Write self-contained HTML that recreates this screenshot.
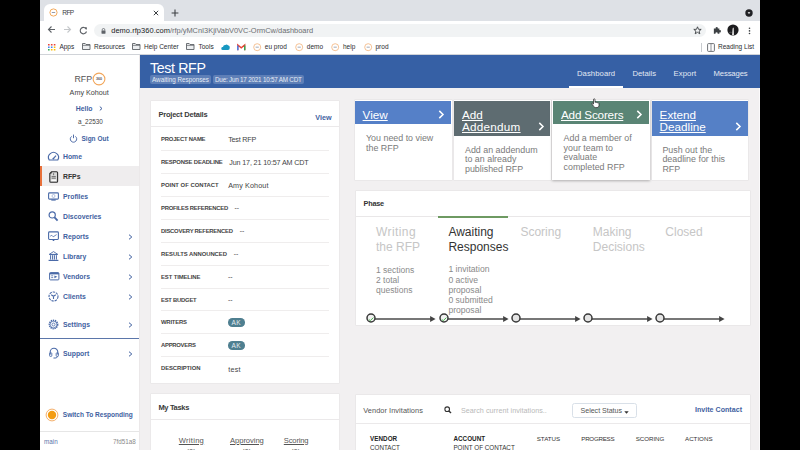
<!DOCTYPE html>
<html><head><meta charset="utf-8">
<style>
*{box-sizing:border-box;margin:0;padding:0}
html,body{width:800px;height:450px;overflow:hidden;background:#000;font-family:"Liberation Sans",sans-serif;position:relative}
.a{position:absolute;white-space:nowrap}
svg{position:absolute;overflow:visible}
</style></head><body>
<div class="a" style="left:40px;top:0px;width:720px;height:450px;background:#fff;"></div>
<div class="a" style="left:40px;top:0px;width:720px;height:21px;background:#dee1e6;"></div>
<div class="a" style="left:44px;top:4px;width:120px;height:17px;background:#fff;border-radius:6px 6px 0 0"></div>
<svg style="left:49px;top:8px" width="9" height="9" viewBox="0 0 9 9"><circle cx="4.5" cy="4.5" r="3.6" fill="#fff" stroke="#f0a04b" stroke-width="0.9"/><rect x="2.8" y="4.1" width="3.4" height="0.9" fill="#8a8fa0"/></svg>
<div class="a" style="left:62.30px;top:10.03px;font-size:6.6px;line-height:6.6px;color:#3c4043;font-weight:400;letter-spacing:-0.663px;font-family:'Liberation Sans',sans-serif;">RFP</div>
<svg style="left:153px;top:9.5px" width="6" height="6" viewBox="0 0 6 6"><path d="M0.8 0.8L5.2 5.2M5.2 0.8L0.8 5.2" stroke="#3c4043" stroke-width="1"/></svg>
<svg style="left:171px;top:8.5px" width="8" height="8" viewBox="0 0 8 8"><path d="M4 0.6V7.4M0.6 4H7.4" stroke="#3c4043" stroke-width="1.1"/></svg>
<svg style="left:744.2px;top:7.6px" width="10" height="10" viewBox="0 0 10 10"><circle cx="5" cy="5" r="3.7" fill="#202124"/><path d="M3.6 4.3 L5 5.9 L6.4 4.3Z" fill="#fff"/></svg>
<div class="a" style="left:40px;top:21px;width:720px;height:16px;background:#fff;"></div>
<div class="a" style="left:94px;top:23.6px;width:612px;height:13.2px;background:#f1f3f4;border-radius:7px"></div>
<svg style="left:47px;top:25px" width="9" height="9" viewBox="0 0 9 9"><path d="M8 4.5H1.5M4.5 1.5L1.5 4.5L4.5 7.5" stroke="#5f6368" stroke-width="1.1" fill="none"/></svg>
<svg style="left:63px;top:25px" width="9" height="9" viewBox="0 0 9 9"><path d="M1 4.5H7.5M4.5 1.5L7.5 4.5L4.5 7.5" stroke="#c4c7ca" stroke-width="1.1" fill="none"/></svg>
<svg style="left:79px;top:25.5px" width="9" height="9" viewBox="0 0 9 9"><path d="M7.3 3.2A3.2 3.2 0 1 0 7.5 5.5" stroke="#5f6368" stroke-width="1.1" fill="none"/><path d="M5.2 1.2L7.8 1.2L7.8 3.8Z" fill="#5f6368"/></svg>
<svg style="left:101px;top:27.5px" width="5" height="6" viewBox="0 0 5 6"><path d="M1.2 2.6V1.8A1.3 1.3 0 0 1 3.8 1.8V2.6" stroke="#5f6368" stroke-width="0.8" fill="none"/><rect x="0.5" y="2.5" width="4" height="3.2" rx="0.4" fill="#5f6368"/></svg>
<div class="a" style="left:111.20px;top:27.32px;font-size:7.45px;line-height:7.45px;color:#202124;font-weight:400;letter-spacing:0.062px;font-family:'Liberation Sans',sans-serif;">demo.rfp360.com</div>
<div class="a" style="left:170.00px;top:27.32px;font-size:7.45px;line-height:7.45px;color:#6b6e72;font-weight:400;letter-spacing:-0.019px;font-family:'Liberation Sans',sans-serif;">/rfp/yMCnI3KjiVabV0VC-OrmCw/dashboard</div>
<svg style="left:692.5px;top:25.5px" width="9" height="9" viewBox="0 0 9 9"><path d="M4.5 0.8L5.5 3.3L8.2 3.4L6.1 5.1L6.8 7.8L4.5 6.3L2.2 7.8L2.9 5.1L0.8 3.4L3.5 3.3Z" fill="none" stroke="#3c4043" stroke-width="0.9" stroke-linejoin="round"/></svg>
<svg style="left:713.3px;top:25.6px" width="8.5" height="8.5" viewBox="0 0 10 10"><path d="M1 3H3.2A1.3 1.3 0 1 1 5.6 3H7.5V5A1.3 1.3 0 1 1 7.5 7.4V9.2H5.4A1.3 1.3 0 1 0 3 9.2H1Z" fill="#3c4043"/></svg>
<svg style="left:727px;top:24.3px" width="12" height="12" viewBox="0 0 12 12"><circle cx="6" cy="6" r="5.6" fill="#1d1d1f"/><path d="M5 11 L5.5 5 Q6 2.5 6.8 4 L7 11Z" fill="#d9d9d9"/><path d="M2 9 Q4 7 4.5 9" stroke="#777" stroke-width="0.6" fill="none"/></svg>
<svg style="left:747.5px;top:25.5px" width="3" height="10" viewBox="0 0 3 10"><circle cx="1.5" cy="2.3" r="0.8" fill="#3c4043"/><circle cx="1.5" cy="4.9" r="0.8" fill="#3c4043"/><circle cx="1.5" cy="7.5" r="0.8" fill="#3c4043"/></svg>
<div class="a" style="left:40px;top:37px;width:720px;height:18px;background:#fff;"></div>
<div class="a" style="left:40px;top:54.4px;width:720px;height:0.6px;background:#d0d3d8;"></div>
<svg style="left:47.7px;top:43.6px" width="7.5" height="6.5" viewBox="0 0 7.5 6.5"><rect x="0" y="0" width="1.6" height="1.5" fill="#ea4335"/><rect x="2.9" y="0" width="1.6" height="1.5" fill="#ea4335"/><rect x="5.8" y="0" width="1.6" height="1.5" fill="#ea4335"/><rect x="0" y="2.5" width="1.6" height="1.5" fill="#4285f4"/><rect x="2.9" y="2.5" width="1.6" height="1.5" fill="#4285f4"/><rect x="5.8" y="2.5" width="1.6" height="1.5" fill="#fbbc05"/><rect x="0" y="5" width="1.6" height="1.5" fill="#34a853"/><rect x="2.9" y="5" width="1.6" height="1.5" fill="#fbbc05"/><rect x="5.8" y="5" width="1.6" height="1.5" fill="#fbbc05"/></svg>
<div class="a" style="left:59.40px;top:44.08px;font-size:6.5px;line-height:6.5px;color:#2a2c2f;font-weight:400;letter-spacing:0.000px;font-family:'Liberation Sans',sans-serif;">Apps</div>
<svg style="left:81.8px;top:43.3px" width="8.5" height="7" viewBox="0 0 8.5 7"><path d="M0.5 0.5H3.2L4 1.5H8V6.5H0.5Z" fill="#eceef0" stroke="#5f6368" stroke-width="0.9"/><path d="M0.5 2.4H8" stroke="#5f6368" stroke-width="0.7"/></svg>
<div class="a" style="left:94.00px;top:44.08px;font-size:6.5px;line-height:6.5px;color:#2a2c2f;font-weight:400;letter-spacing:0.000px;font-family:'Liberation Sans',sans-serif;">Resources</div>
<svg style="left:131.8px;top:43.3px" width="8.5" height="7" viewBox="0 0 8.5 7"><path d="M0.5 0.5H3.2L4 1.5H8V6.5H0.5Z" fill="#eceef0" stroke="#5f6368" stroke-width="0.9"/><path d="M0.5 2.4H8" stroke="#5f6368" stroke-width="0.7"/></svg>
<div class="a" style="left:144.00px;top:44.08px;font-size:6.5px;line-height:6.5px;color:#2a2c2f;font-weight:400;letter-spacing:0.000px;font-family:'Liberation Sans',sans-serif;">Help Center</div>
<svg style="left:186px;top:43.3px" width="8.5" height="7" viewBox="0 0 8.5 7"><path d="M0.5 0.5H3.2L4 1.5H8V6.5H0.5Z" fill="#eceef0" stroke="#5f6368" stroke-width="0.9"/><path d="M0.5 2.4H8" stroke="#5f6368" stroke-width="0.7"/></svg>
<div class="a" style="left:198.50px;top:44.08px;font-size:6.5px;line-height:6.5px;color:#2a2c2f;font-weight:400;letter-spacing:0.000px;font-family:'Liberation Sans',sans-serif;">Tools</div>
<svg style="left:221px;top:43.5px" width="9" height="6.5" viewBox="0 0 9 6.5"><path d="M1.5 6 Q0 6 0.3 4.3 Q0.5 2.8 2 3 Q2.3 0.8 4.3 1 Q5.6 0 7 1.3 Q9 1.6 8.8 3.8 Q8.8 6 7 6Z" fill="#1798c1"/></svg>
<svg style="left:237.3px;top:43.6px" width="8.5" height="6.5" viewBox="0 0 8.5 6.5"><path d="M0.8 6.2V1 L4.25 3.8 L7.7 1 V6.2" stroke="#ea4335" stroke-width="1.4" fill="none"/><path d="M0.8 6.2V1.5" stroke="#4285f4" stroke-width="1.4"/><path d="M7.7 6.2V1.5" stroke="#34a853" stroke-width="1.4"/></svg>
<svg style="left:252.8px;top:42.8px" width="8.4" height="8.4" viewBox="0 0 8.4 8.4"><circle cx="4.2" cy="4.2" r="3.5" fill="#fff" stroke="#f2b27a" stroke-width="0.8"/><rect x="2.6" y="3.7" width="3.2" height="0.9" fill="#9aa0ad"/></svg>
<div class="a" style="left:264.80px;top:44.08px;font-size:6.5px;line-height:6.5px;color:#2a2c2f;font-weight:400;letter-spacing:0.000px;font-family:'Liberation Sans',sans-serif;">eu prod</div>
<svg style="left:294.8px;top:42.8px" width="8.4" height="8.4" viewBox="0 0 8.4 8.4"><circle cx="4.2" cy="4.2" r="3.5" fill="#fff" stroke="#f2b27a" stroke-width="0.8"/><rect x="2.6" y="3.7" width="3.2" height="0.9" fill="#9aa0ad"/></svg>
<div class="a" style="left:306.80px;top:44.08px;font-size:6.5px;line-height:6.5px;color:#2a2c2f;font-weight:400;letter-spacing:0.000px;font-family:'Liberation Sans',sans-serif;">demo</div>
<svg style="left:330.8px;top:42.8px" width="8.4" height="8.4" viewBox="0 0 8.4 8.4"><circle cx="4.2" cy="4.2" r="3.5" fill="#fff" stroke="#f2b27a" stroke-width="0.8"/><rect x="2.6" y="3.7" width="3.2" height="0.9" fill="#9aa0ad"/></svg>
<div class="a" style="left:343.00px;top:44.08px;font-size:6.5px;line-height:6.5px;color:#2a2c2f;font-weight:400;letter-spacing:0.000px;font-family:'Liberation Sans',sans-serif;">help</div>
<svg style="left:363.6px;top:42.8px" width="8.4" height="8.4" viewBox="0 0 8.4 8.4"><circle cx="4.2" cy="4.2" r="3.5" fill="#fff" stroke="#f2b27a" stroke-width="0.8"/><rect x="2.6" y="3.7" width="3.2" height="0.9" fill="#9aa0ad"/></svg>
<div class="a" style="left:375.50px;top:44.08px;font-size:6.5px;line-height:6.5px;color:#2a2c2f;font-weight:400;letter-spacing:0.000px;font-family:'Liberation Sans',sans-serif;">prod</div>
<div class="a" style="left:700.5px;top:42.5px;width:0.7px;height:9px;background:#c8cbcf;"></div>
<svg style="left:706.5px;top:42.5px" width="8" height="9" viewBox="0 0 8 9"><rect x="0.6" y="0.6" width="6.8" height="7.8" rx="0.8" fill="none" stroke="#5f6368" stroke-width="0.9"/><path d="M4 1V8" stroke="#5f6368" stroke-width="0.7"/></svg>
<div class="a" style="left:718.00px;top:44.08px;font-size:6.5px;line-height:6.5px;color:#2a2c2f;font-weight:400;letter-spacing:0.000px;font-family:'Liberation Sans',sans-serif;">Reading List</div>
<div class="a" style="left:40px;top:55px;width:100px;height:395px;background:#fff;"></div>
<div class="a" style="left:139px;top:55px;width:1px;height:395px;background:#ebe8e9;"></div>
<div class="a" style="left:140px;top:55px;width:620px;height:395px;background:#f2f0f1;"></div>
<div class="a" style="left:140px;top:55px;width:620px;height:32.5px;background:#3660a5;"></div>
<div class="a" style="left:74.50px;top:74.98px;font-size:8.8px;line-height:8.8px;color:#555;font-weight:400;letter-spacing:0.000px;font-family:'Liberation Sans',sans-serif;">RFP</div>
<svg style="left:92px;top:72px" width="14" height="14" viewBox="0 0 14 14"><circle cx="7" cy="7" r="5.9" fill="#fff" stroke="#f2a65a" stroke-width="1.1"/><text x="7" y="8.3" font-size="3.6" text-anchor="middle" fill="#555" font-family="Liberation Sans" font-weight="700">360</text></svg>
<div class="a" style="left:69.60px;top:89.44px;font-size:7.2px;line-height:7.2px;color:#444;font-weight:400;letter-spacing:0.000px;font-family:'Liberation Sans',sans-serif;">Amy Kohout</div>
<div class="a" style="left:75.70px;top:106.39px;font-size:6.9px;line-height:6.9px;color:#3f5f9f;font-weight:700;letter-spacing:0.000px;font-family:'Liberation Sans',sans-serif;">Hello</div>
<svg style="left:99px;top:105.8px" width="4" height="5" viewBox="0 0 4 5"><path d="M0.8 0.6L3 2.5L0.8 4.4" stroke="#3f5f9f" stroke-width="1" fill="none"/></svg>
<div class="a" style="left:78.00px;top:118.63px;font-size:6.4px;line-height:6.4px;color:#444;font-weight:400;letter-spacing:0.000px;font-family:'Liberation Sans',sans-serif;">a_22530</div>
<svg style="left:69px;top:134px" width="9" height="9" viewBox="0 0 9 9"><path d="M2.6 2.4A3.2 3.2 0 1 0 6.4 2.4" stroke="#3f5f9f" stroke-width="0.9" fill="none"/><path d="M4.5 0.6V4.2" stroke="#3f5f9f" stroke-width="0.9"/></svg>
<div class="a" style="left:81.50px;top:135.98px;font-size:6.5px;line-height:6.5px;color:#3f5f9f;font-weight:700;letter-spacing:0.000px;font-family:'Liberation Sans',sans-serif;">Sign Out</div>
<div class="a" style="left:40px;top:166.3px;width:99px;height:20.1px;background:#efedee;"></div>
<div class="a" style="left:40px;top:166.3px;width:2px;height:20.1px;background:#e8703a;"></div>
<svg style="left:47px;top:151px" width="13" height="10" viewBox="0 0 13 10"><path d="M2.2 9A5 5 0 1 1 10.8 9Z" fill="none" stroke="#4a6aa8" stroke-width="1.15" stroke-linejoin="round"/><path d="M6.4 7.6L9 4.6" stroke="#4a6aa8" stroke-width="1.2"/><circle cx="6.3" cy="7.6" r="0.9" fill="#4a6aa8"/></svg>
<div class="a" style="left:63.00px;top:154.41px;font-size:6.85px;line-height:6.85px;color:#3f5f9f;font-weight:700;letter-spacing:0.000px;font-family:'Liberation Sans',sans-serif;">Home</div>
<svg style="left:48.5px;top:170.5px" width="9.5" height="12" viewBox="0 0 9.5 12"><path d="M2.6 0.7H7.6Q8.6 0.7 8.6 1.7V10.3Q8.6 11.3 7.6 11.3H1.8Q0.8 11.3 0.8 10.3V2.5Z" fill="#d8d8d8" stroke="#2e2e2e" stroke-width="1.1"/><path d="M0.8 2.6L2.6 0.7V2.6Z" fill="#2e2e2e"/><path d="M4.6 2.2V4.2M2.6 5.6H6.8M2.6 7.2H6.8" stroke="#444" stroke-width="0.7"/><rect x="2.3" y="8.6" width="4.8" height="1.3" fill="#fff"/></svg>
<div class="a" style="left:63.00px;top:174.01px;font-size:6.85px;line-height:6.85px;color:#333;font-weight:700;letter-spacing:0.000px;font-family:'Liberation Sans',sans-serif;">RFPs</div>
<svg style="left:48px;top:191.5px" width="11" height="9" viewBox="0 0 11 9"><rect x="0.6" y="0.9" width="9.8" height="6.2" rx="0.9" fill="none" stroke="#4a6aa8" stroke-width="1.1"/><circle cx="5.5" cy="4" r="1.5" fill="none" stroke="#9db0d6" stroke-width="0.8"/><rect x="3.3" y="7.5" width="4.4" height="1.1" fill="#4a6aa8"/></svg>
<div class="a" style="left:63.00px;top:194.41px;font-size:6.85px;line-height:6.85px;color:#3f5f9f;font-weight:700;letter-spacing:0.000px;font-family:'Liberation Sans',sans-serif;">Profiles</div>
<svg style="left:48px;top:211px" width="11" height="11" viewBox="0 0 11 11"><circle cx="4.2" cy="3.9" r="3.1" fill="none" stroke="#4a6aa8" stroke-width="1.2"/><path d="M6.3 6.2L9.6 9.6" stroke="#4a6aa8" stroke-width="1.8"/></svg>
<div class="a" style="left:63.00px;top:214.41px;font-size:6.85px;line-height:6.85px;color:#3f5f9f;font-weight:700;letter-spacing:0.000px;font-family:'Liberation Sans',sans-serif;">Discoveries</div>
<svg style="left:48px;top:230.5px" width="11" height="11" viewBox="0 0 11 11"><rect x="0.6" y="0.9" width="9.8" height="7.6" rx="0.9" fill="none" stroke="#4a6aa8" stroke-width="1.1"/><path d="M2.2 5.2L3.8 4.3L5.2 5.8L8.6 3.6" stroke="#4a6aa8" stroke-width="0.8" fill="none"/><rect x="4.7" y="8.6" width="1.6" height="1.4" fill="#4a6aa8"/></svg>
<div class="a" style="left:63.00px;top:234.41px;font-size:6.85px;line-height:6.85px;color:#3f5f9f;font-weight:700;letter-spacing:0.000px;font-family:'Liberation Sans',sans-serif;">Reports</div>
<svg style="left:127.5px;top:234px" width="5" height="6" viewBox="0 0 5 6"><path d="M1 0.7L3.8 3L1 5.3" stroke="#3f5f9f" stroke-width="1" fill="none"/></svg>
<svg style="left:48px;top:250.8px" width="11" height="10.5" viewBox="0 0 11 10.5"><path d="M1.2 3.4L5.5 0.6L9.8 3.4Z" fill="none" stroke="#4a6aa8" stroke-width="0.9" stroke-linejoin="round"/><path d="M1.8 3.6H9.2" stroke="#4a6aa8" stroke-width="0.9"/><path d="M2.6 4.2V8.6M4.6 4.2V8.6M6.4 4.2V8.6M8.4 4.2V8.6" stroke="#4a6aa8" stroke-width="1"/><path d="M0.6 9.4H10.4" stroke="#4a6aa8" stroke-width="1.2"/></svg>
<div class="a" style="left:63.00px;top:254.01px;font-size:6.85px;line-height:6.85px;color:#3f5f9f;font-weight:700;letter-spacing:0.000px;font-family:'Liberation Sans',sans-serif;">Library</div>
<svg style="left:127.5px;top:253.60000000000002px" width="5" height="6" viewBox="0 0 5 6"><path d="M1 0.7L3.8 3L1 5.3" stroke="#3f5f9f" stroke-width="1" fill="none"/></svg>
<svg style="left:48.5px;top:272px" width="10.5" height="8.5" viewBox="0 0 10.5 8.5"><rect x="0.6" y="0.6" width="9.3" height="7.3" rx="0.8" fill="none" stroke="#4a6aa8" stroke-width="1"/><path d="M0.6 1.6H9.9" stroke="#4a6aa8" stroke-width="1.6"/><path d="M2.2 3.8H4.2M2.2 5.6H4.2" stroke="#4a6aa8" stroke-width="0.8"/><path d="M5.4 3.4L8.3 4.7L5.4 6.2Z" fill="#4a6aa8"/></svg>
<div class="a" style="left:63.00px;top:274.01px;font-size:6.85px;line-height:6.85px;color:#3f5f9f;font-weight:700;letter-spacing:0.000px;font-family:'Liberation Sans',sans-serif;">Vendors</div>
<svg style="left:127.5px;top:273.6px" width="5" height="6" viewBox="0 0 5 6"><path d="M1 0.7L3.8 3L1 5.3" stroke="#3f5f9f" stroke-width="1" fill="none"/></svg>
<svg style="left:47.8px;top:290.8px" width="11" height="11" viewBox="0 0 11 11"><circle cx="5.5" cy="5.5" r="4.5" fill="none" stroke="#4a6aa8" stroke-width="1.1" stroke-dasharray="2.4 0.9"/><path d="M3.2 3.8L5.5 5.3L7.8 3.8M5.5 5.3V8" stroke="#4a6aa8" stroke-width="1.1" fill="none"/></svg>
<div class="a" style="left:63.00px;top:294.01px;font-size:6.85px;line-height:6.85px;color:#3f5f9f;font-weight:700;letter-spacing:0.000px;font-family:'Liberation Sans',sans-serif;">Clients</div>
<svg style="left:127.5px;top:293.6px" width="5" height="6" viewBox="0 0 5 6"><path d="M1 0.7L3.8 3L1 5.3" stroke="#3f5f9f" stroke-width="1" fill="none"/></svg>
<svg style="left:48px;top:318.5px" width="11" height="11" viewBox="0 0 11 11"><circle cx="5.5" cy="5.5" r="4.1" fill="none" stroke="#4a6aa8" stroke-width="1.6" stroke-dasharray="1.3 0.72"/><circle cx="5.5" cy="5.5" r="3.3" fill="none" stroke="#4a6aa8" stroke-width="0.6"/><circle cx="5.5" cy="5.5" r="1.5" fill="none" stroke="#4a6aa8" stroke-width="0.8"/></svg>
<div class="a" style="left:63.00px;top:322.01px;font-size:6.85px;line-height:6.85px;color:#3f5f9f;font-weight:700;letter-spacing:0.000px;font-family:'Liberation Sans',sans-serif;">Settings</div>
<svg style="left:127.5px;top:321.6px" width="5" height="6" viewBox="0 0 5 6"><path d="M1 0.7L3.8 3L1 5.3" stroke="#3f5f9f" stroke-width="1" fill="none"/></svg>
<div class="a" style="left:40px;top:338.2px;width:99px;height:0.9px;background:#5b76aa;"></div>
<svg style="left:48.5px;top:347px" width="10" height="12" viewBox="0 0 10 12"><path d="M1.2 7.5V5A3.8 3.8 0 0 1 8.8 5V7.5" fill="none" stroke="#4a6aa8" stroke-width="1.1"/><rect x="0.6" y="5.8" width="2.2" height="3.6" rx="0.7" fill="none" stroke="#4a6aa8" stroke-width="0.9"/><rect x="7.2" y="5.8" width="2.2" height="3.6" rx="0.7" fill="none" stroke="#4a6aa8" stroke-width="0.9"/><path d="M8.6 9.4Q8.4 11 6.2 11" stroke="#4a6aa8" stroke-width="0.9" fill="none"/><rect x="4.4" y="10.4" width="2" height="1.2" rx="0.4" fill="#4a6aa8"/></svg>
<div class="a" style="left:63.00px;top:351.01px;font-size:6.85px;line-height:6.85px;color:#3f5f9f;font-weight:700;letter-spacing:0.000px;font-family:'Liberation Sans',sans-serif;">Support</div>
<svg style="left:127.5px;top:350.6px" width="5" height="6" viewBox="0 0 5 6"><path d="M1 0.7L3.8 3L1 5.3" stroke="#3f5f9f" stroke-width="1" fill="none"/></svg>
<svg style="left:45px;top:408px" width="14" height="14" viewBox="0 0 14 14"><circle cx="7" cy="7" r="5.9" fill="#fff" stroke="#f2a65a" stroke-width="0.9"/><circle cx="7" cy="7" r="4.2" fill="#f39c12"/></svg>
<div class="a" style="left:62.80px;top:412.36px;font-size:6.55px;line-height:6.55px;color:#3f5f9f;font-weight:700;letter-spacing:0.000px;font-family:'Liberation Sans',sans-serif;">Switch To Responding</div>
<div class="a" style="left:40px;top:430.6px;width:99px;height:0.8px;background:#e6e6e6;"></div>
<div class="a" style="left:44.00px;top:438.68px;font-size:6.3px;line-height:6.3px;color:#5b76aa;font-weight:400;letter-spacing:0.000px;font-family:'Liberation Sans',sans-serif;">main</div>
<div class="a" style="left:113.00px;top:438.68px;font-size:6.3px;line-height:6.3px;color:#8a8a8a;font-weight:400;letter-spacing:0.000px;font-family:'Liberation Sans',sans-serif;">7fd51a8</div>
<div class="a" style="left:150.00px;top:61.18px;font-size:14.2px;line-height:14.2px;color:#fff;font-weight:400;letter-spacing:-0.354px;font-family:'Liberation Sans',sans-serif;">Test RFP</div>
<div class="a" style="left:150.2px;top:75.3px;width:60.6px;height:9px;background:rgba(255,255,255,0.2);border-radius:2px"></div>
<div class="a" style="left:152.00px;top:77.48px;font-size:6.3px;line-height:6.3px;color:#e6ecf5;font-weight:400;letter-spacing:0.003px;font-family:'Liberation Sans',sans-serif;">Awaiting Responses</div>
<div class="a" style="left:213px;top:75.3px;width:91px;height:9px;background:rgba(255,255,255,0.2);border-radius:2px"></div>
<div class="a" style="left:215.00px;top:77.48px;font-size:6.3px;line-height:6.3px;color:#e6ecf5;font-weight:400;letter-spacing:-0.211px;font-family:'Liberation Sans',sans-serif;">Due: Jun 17 2021 10:57 AM CDT</div>
<div class="a" style="left:577.00px;top:70.20px;font-size:7.7px;line-height:7.7px;color:#e3e9f3;font-weight:400;letter-spacing:0.066px;font-family:'Liberation Sans',sans-serif;">Dashboard</div>
<div class="a" style="left:632.50px;top:70.20px;font-size:7.7px;line-height:7.7px;color:#e3e9f3;font-weight:400;letter-spacing:0.000px;font-family:'Liberation Sans',sans-serif;">Details</div>
<div class="a" style="left:673.50px;top:70.20px;font-size:7.7px;line-height:7.7px;color:#e3e9f3;font-weight:400;letter-spacing:0.097px;font-family:'Liberation Sans',sans-serif;">Export</div>
<div class="a" style="left:713.50px;top:70.20px;font-size:7.7px;line-height:7.7px;color:#e3e9f3;font-weight:400;letter-spacing:-0.130px;font-family:'Liberation Sans',sans-serif;">Messages</div>
<div class="a" style="left:569px;top:85.9px;width:54px;height:1.9px;background:#fff;"></div>
<div class="a" style="left:151px;top:101px;width:187.7px;height:282px;background:#fff;box-shadow:0 0 0 0.5px #e4e2e3"></div>
<div class="a" style="left:158.40px;top:111.00px;font-size:7.5px;line-height:7.5px;color:#3a3a3a;font-weight:700;letter-spacing:-0.207px;font-family:'Liberation Sans',sans-serif;">Project Details</div>
<div class="a" style="left:315.30px;top:113.74px;font-size:7.2px;line-height:7.2px;color:#3f5f9f;font-weight:700;letter-spacing:0.000px;font-family:'Liberation Sans',sans-serif;">View</div>
<div class="a" style="left:151px;top:126.3px;width:187.7px;height:0.8px;background:#ebe9ea;"></div>
<div class="a" style="left:161.00px;top:136.87px;font-size:5.9px;line-height:5.9px;color:#444;font-weight:700;letter-spacing:-0.209px;font-family:'Liberation Sans',sans-serif;">PROJECT NAME</div>
<div class="a" style="left:228.20px;top:136.24px;font-size:7.2px;line-height:7.2px;color:#444;font-weight:400;letter-spacing:-0.219px;font-family:'Liberation Sans',sans-serif;">Test RFP</div>
<div class="a" style="left:161px;top:149.7px;width:168px;height:0.8px;background:#efeded;"></div>
<div class="a" style="left:161.00px;top:159.87px;font-size:5.9px;line-height:5.9px;color:#444;font-weight:700;letter-spacing:-0.175px;font-family:'Liberation Sans',sans-serif;">RESPONSE DEADLINE</div>
<div class="a" style="left:229.20px;top:159.24px;font-size:7.2px;line-height:7.2px;color:#444;font-weight:400;letter-spacing:-0.143px;font-family:'Liberation Sans',sans-serif;">Jun 17, 21 10:57 AM CDT</div>
<div class="a" style="left:161px;top:172.7px;width:168px;height:0.8px;background:#efeded;"></div>
<div class="a" style="left:161.00px;top:182.87px;font-size:5.9px;line-height:5.9px;color:#444;font-weight:700;letter-spacing:-0.007px;font-family:'Liberation Sans',sans-serif;">POINT OF CONTACT</div>
<div class="a" style="left:228.20px;top:182.24px;font-size:7.2px;line-height:7.2px;color:#444;font-weight:400;letter-spacing:0.125px;font-family:'Liberation Sans',sans-serif;">Amy Kohout</div>
<div class="a" style="left:161px;top:195.7px;width:168px;height:0.8px;background:#efeded;"></div>
<div class="a" style="left:161.00px;top:205.87px;font-size:5.9px;line-height:5.9px;color:#444;font-weight:700;letter-spacing:-0.251px;font-family:'Liberation Sans',sans-serif;">PROFILES REFERENCED</div>
<div class="a" style="left:234.50px;top:205.44px;font-size:6.8px;line-height:6.8px;color:#444;font-weight:400;letter-spacing:0.000px;font-family:'Liberation Sans',sans-serif;">--</div>
<div class="a" style="left:161px;top:218.7px;width:168px;height:0.8px;background:#efeded;"></div>
<div class="a" style="left:161.00px;top:228.87px;font-size:5.9px;line-height:5.9px;color:#444;font-weight:700;letter-spacing:-0.240px;font-family:'Liberation Sans',sans-serif;">DISCOVERY REFERENCED</div>
<div class="a" style="left:239.70px;top:228.44px;font-size:6.8px;line-height:6.8px;color:#444;font-weight:400;letter-spacing:0.000px;font-family:'Liberation Sans',sans-serif;">--</div>
<div class="a" style="left:161px;top:241.7px;width:168px;height:0.8px;background:#efeded;"></div>
<div class="a" style="left:161.00px;top:251.87px;font-size:5.9px;line-height:5.9px;color:#444;font-weight:700;letter-spacing:-0.052px;font-family:'Liberation Sans',sans-serif;">RESULTS ANNOUNCED</div>
<div class="a" style="left:233.70px;top:251.44px;font-size:6.8px;line-height:6.8px;color:#444;font-weight:400;letter-spacing:0.000px;font-family:'Liberation Sans',sans-serif;">--</div>
<div class="a" style="left:161px;top:264.7px;width:168px;height:0.8px;background:#efeded;"></div>
<div class="a" style="left:161.00px;top:274.87px;font-size:5.9px;line-height:5.9px;color:#444;font-weight:700;letter-spacing:-0.107px;font-family:'Liberation Sans',sans-serif;">EST TIMELINE</div>
<div class="a" style="left:228.00px;top:274.44px;font-size:6.8px;line-height:6.8px;color:#444;font-weight:400;letter-spacing:0.000px;font-family:'Liberation Sans',sans-serif;">--</div>
<div class="a" style="left:161px;top:287.59999999999997px;width:168px;height:0.8px;background:#efeded;"></div>
<div class="a" style="left:161.00px;top:297.67px;font-size:5.9px;line-height:5.9px;color:#444;font-weight:700;letter-spacing:-0.256px;font-family:'Liberation Sans',sans-serif;">EST BUDGET</div>
<div class="a" style="left:228.00px;top:297.24px;font-size:6.8px;line-height:6.8px;color:#444;font-weight:400;letter-spacing:0.000px;font-family:'Liberation Sans',sans-serif;">--</div>
<div class="a" style="left:161px;top:310.40000000000003px;width:168px;height:0.8px;background:#efeded;"></div>
<div class="a" style="left:161.00px;top:320.47px;font-size:5.9px;line-height:5.9px;color:#444;font-weight:700;letter-spacing:-0.209px;font-family:'Liberation Sans',sans-serif;">WRITERS</div>
<div class="a" style="left:228px;top:318.20000000000005px;width:16.5px;height:8.6px;background:#4f7f90;border-radius:4.3px"></div>
<div class="a" style="left:231.60px;top:319.98px;font-size:6.5px;line-height:6.5px;color:#e6eef0;font-weight:400;letter-spacing:0.315px;font-family:'Liberation Sans',sans-serif;">AK</div>
<div class="a" style="left:161px;top:333.3px;width:168px;height:0.8px;background:#efeded;"></div>
<div class="a" style="left:161.00px;top:343.47px;font-size:5.9px;line-height:5.9px;color:#444;font-weight:700;letter-spacing:-0.265px;font-family:'Liberation Sans',sans-serif;">APPROVERS</div>
<div class="a" style="left:228px;top:341.20000000000005px;width:16.5px;height:8.6px;background:#4f7f90;border-radius:4.3px"></div>
<div class="a" style="left:231.60px;top:342.98px;font-size:6.5px;line-height:6.5px;color:#e6eef0;font-weight:400;letter-spacing:0.315px;font-family:'Liberation Sans',sans-serif;">AK</div>
<div class="a" style="left:161px;top:356.25px;width:168px;height:0.8px;background:#efeded;"></div>
<div class="a" style="left:161.00px;top:366.37px;font-size:5.9px;line-height:5.9px;color:#444;font-weight:700;letter-spacing:-0.087px;font-family:'Liberation Sans',sans-serif;">DESCRIPTION</div>
<div class="a" style="left:228.20px;top:365.74px;font-size:7.2px;line-height:7.2px;color:#444;font-weight:400;letter-spacing:0.254px;font-family:'Liberation Sans',sans-serif;">test</div>
<div class="a" style="left:151px;top:394.3px;width:187.7px;height:60px;background:#fff;box-shadow:0 0 0 0.5px #e4e2e3"></div>
<div class="a" style="left:158.40px;top:404.10px;font-size:7.5px;line-height:7.5px;color:#3a3a3a;font-weight:700;letter-spacing:-0.326px;font-family:'Liberation Sans',sans-serif;">My Tasks</div>
<div class="a" style="left:151px;top:419.2px;width:187.7px;height:0.8px;background:#ebe9ea;"></div>
<div class="a" style="left:178.80px;top:436.65px;font-size:7.6px;line-height:7.6px;color:#555;font-weight:400;letter-spacing:0.259px;font-family:'Liberation Sans',sans-serif;text-decoration:underline;text-underline-offset:1.3px;text-decoration-thickness:0.7px">Writing</div>
<div class="a" style="left:186.45px;top:447.65px;font-size:7.6px;line-height:7.6px;color:#555;font-weight:400;letter-spacing:0.000px;font-family:'Liberation Sans',sans-serif;">(0)</div>
<div class="a" style="left:230.00px;top:436.65px;font-size:7.6px;line-height:7.6px;color:#555;font-weight:400;letter-spacing:-0.044px;font-family:'Liberation Sans',sans-serif;text-decoration:underline;text-underline-offset:1.3px;text-decoration-thickness:0.7px">Approving</div>
<div class="a" style="left:241.90px;top:447.65px;font-size:7.6px;line-height:7.6px;color:#555;font-weight:400;letter-spacing:0.000px;font-family:'Liberation Sans',sans-serif;">(0)</div>
<div class="a" style="left:283.80px;top:436.65px;font-size:7.6px;line-height:7.6px;color:#555;font-weight:400;letter-spacing:-0.164px;font-family:'Liberation Sans',sans-serif;text-decoration:underline;text-underline-offset:1.3px;text-decoration-thickness:0.7px">Scoring</div>
<div class="a" style="left:291.10px;top:447.65px;font-size:7.6px;line-height:7.6px;color:#555;font-weight:400;letter-spacing:0.000px;font-family:'Liberation Sans',sans-serif;">(0)</div>
<div class="a" style="left:354.5px;top:99.7px;width:97px;height:80.3px;background:#fff;box-shadow:0 0 0 0.5px #e2e0e1"></div>
<div class="a" style="left:355px;top:100.6px;width:96px;height:23.4px;background:#5580c8;"></div>
<div class="a" style="left:362.60px;top:109.08px;font-size:11.7px;line-height:11.7px;color:#fff;font-weight:400;letter-spacing:0.000px;font-family:'Liberation Sans',sans-serif;text-decoration:underline;text-decoration-thickness:1px;text-underline-offset:1.2px">View</div>
<svg style="left:437.5px;top:109.8px" width="7" height="9" viewBox="0 0 7 9"><path d="M1.3 0.9L5 4.5L1.3 8.1" stroke="#fff" stroke-width="1.5" fill="none"/></svg>
<div class="a" style="left:366.00px;top:133.73px;font-size:8.9px;line-height:8.9px;color:#7a7a7a;font-weight:400;letter-spacing:0.000px;font-family:'Liberation Sans',sans-serif;">You need to view</div>
<div class="a" style="left:366.00px;top:143.58px;font-size:8.9px;line-height:8.9px;color:#7a7a7a;font-weight:400;letter-spacing:0.000px;font-family:'Liberation Sans',sans-serif;">the RFP</div>
<div class="a" style="left:453.5px;top:99.7px;width:97px;height:80.3px;background:#fff;box-shadow:0 0 0 0.5px #e2e0e1"></div>
<div class="a" style="left:454px;top:100.6px;width:96px;height:35.4px;background:#5e6c71;"></div>
<div class="a" style="left:462.00px;top:109.08px;font-size:11.7px;line-height:11.7px;color:#fff;font-weight:400;letter-spacing:0.000px;font-family:'Liberation Sans',sans-serif;text-decoration:underline;text-decoration-thickness:1px;text-underline-offset:1.2px">Add</div>
<div class="a" style="left:462.00px;top:121.08px;font-size:11.7px;line-height:11.7px;color:#fff;font-weight:400;letter-spacing:0.259px;font-family:'Liberation Sans',sans-serif;text-decoration:underline;text-decoration-thickness:1px;text-underline-offset:1.2px">Addendum</div>
<svg style="left:537.5px;top:121.8px" width="7" height="9" viewBox="0 0 7 9"><path d="M1.3 0.9L5 4.5L1.3 8.1" stroke="#fff" stroke-width="1.5" fill="none"/></svg>
<div class="a" style="left:465.00px;top:145.63px;font-size:8.9px;line-height:8.9px;color:#7a7a7a;font-weight:400;letter-spacing:0.000px;font-family:'Liberation Sans',sans-serif;">Add an addendum</div>
<div class="a" style="left:465.00px;top:155.48px;font-size:8.9px;line-height:8.9px;color:#7a7a7a;font-weight:400;letter-spacing:0.000px;font-family:'Liberation Sans',sans-serif;">to an already</div>
<div class="a" style="left:465.00px;top:165.33px;font-size:8.9px;line-height:8.9px;color:#7a7a7a;font-weight:400;letter-spacing:0.000px;font-family:'Liberation Sans',sans-serif;">published RFP</div>
<div class="a" style="left:552px;top:99.7px;width:97.5px;height:80.3px;background:#fff;box-shadow:0 1px 2.5px rgba(0,0,0,0.28)"></div>
<div class="a" style="left:552.5px;top:100.6px;width:96.5px;height:23.4px;background:#5a8575;"></div>
<div class="a" style="left:561.00px;top:109.08px;font-size:11.7px;line-height:11.7px;color:#fff;font-weight:400;letter-spacing:-0.183px;font-family:'Liberation Sans',sans-serif;text-decoration:underline;text-decoration-thickness:1px;text-underline-offset:1.2px">Add Scorers</div>
<svg style="left:636px;top:109.8px" width="7" height="9" viewBox="0 0 7 9"><path d="M1.3 0.9L5 4.5L1.3 8.1" stroke="#fff" stroke-width="1.5" fill="none"/></svg>
<div class="a" style="left:563.60px;top:133.73px;font-size:8.9px;line-height:8.9px;color:#7a7a7a;font-weight:400;letter-spacing:0.000px;font-family:'Liberation Sans',sans-serif;">Add a member of</div>
<div class="a" style="left:563.60px;top:143.58px;font-size:8.9px;line-height:8.9px;color:#7a7a7a;font-weight:400;letter-spacing:0.000px;font-family:'Liberation Sans',sans-serif;">your team to</div>
<div class="a" style="left:563.60px;top:153.43px;font-size:8.9px;line-height:8.9px;color:#7a7a7a;font-weight:400;letter-spacing:0.000px;font-family:'Liberation Sans',sans-serif;">evaluate</div>
<div class="a" style="left:563.60px;top:163.28px;font-size:8.9px;line-height:8.9px;color:#7a7a7a;font-weight:400;letter-spacing:0.000px;font-family:'Liberation Sans',sans-serif;">completed RFP</div>
<svg style="left:590.8px;top:97.8px" width="9" height="10" viewBox="0 0 9 10"><path d="M2.5 1.2Q3.3 0.5 4 1.2V4.5Q4.5 3.8 5.3 4.4Q6.2 4.1 6.7 4.9Q7.6 4.7 8 5.6V8Q7.6 9.5 6 9.6H4.5Q3.5 9.4 2.6 8.3L0.8 5.9Q0.7 5 1.6 5.2L2.5 6Z" fill="#fff" stroke="#222" stroke-width="0.7"/></svg>
<div class="a" style="left:651.5px;top:99.7px;width:96.6px;height:80.3px;background:#fff;box-shadow:0 0 0 0.5px #e2e0e1"></div>
<div class="a" style="left:652px;top:100.6px;width:95.6px;height:35.4px;background:#5580c6;"></div>
<div class="a" style="left:659.60px;top:109.08px;font-size:11.7px;line-height:11.7px;color:#fff;font-weight:400;letter-spacing:0.000px;font-family:'Liberation Sans',sans-serif;text-decoration:underline;text-decoration-thickness:1px;text-underline-offset:1.2px">Extend</div>
<div class="a" style="left:659.60px;top:121.08px;font-size:11.7px;line-height:11.7px;color:#fff;font-weight:400;letter-spacing:0.000px;font-family:'Liberation Sans',sans-serif;text-decoration:underline;text-decoration-thickness:1px;text-underline-offset:1.2px">Deadline</div>
<svg style="left:734.5px;top:121.8px" width="7" height="9" viewBox="0 0 7 9"><path d="M1.3 0.9L5 4.5L1.3 8.1" stroke="#fff" stroke-width="1.5" fill="none"/></svg>
<div class="a" style="left:662.40px;top:145.63px;font-size:8.9px;line-height:8.9px;color:#7a7a7a;font-weight:400;letter-spacing:0.000px;font-family:'Liberation Sans',sans-serif;">Push out the</div>
<div class="a" style="left:662.40px;top:155.48px;font-size:8.9px;line-height:8.9px;color:#7a7a7a;font-weight:400;letter-spacing:0.000px;font-family:'Liberation Sans',sans-serif;">deadline for this</div>
<div class="a" style="left:662.40px;top:165.33px;font-size:8.9px;line-height:8.9px;color:#7a7a7a;font-weight:400;letter-spacing:0.000px;font-family:'Liberation Sans',sans-serif;">RFP</div>
<div class="a" style="left:355.8px;top:191px;width:394px;height:134.4px;background:#fff;box-shadow:0 0 0 0.5px #e2e0e1"></div>
<div class="a" style="left:363.60px;top:200.40px;font-size:7.3px;line-height:7.3px;color:#333;font-weight:700;letter-spacing:-0.260px;font-family:'Liberation Sans',sans-serif;">Phase</div>
<div class="a" style="left:355.8px;top:215.6px;width:394px;height:0.8px;background:#e9e7e8;"></div>
<div class="a" style="left:438.2px;top:215.8px;width:69.6px;height:1.9px;background:#6e9a62;"></div>
<div class="a" style="left:376.00px;top:226.24px;font-size:12px;line-height:12px;color:#c6c6c6;font-weight:400;letter-spacing:0.412px;font-family:'Liberation Sans',sans-serif;">Writing</div>
<div class="a" style="left:376.00px;top:241.04px;font-size:12px;line-height:12px;color:#c6c6c6;font-weight:400;letter-spacing:0.000px;font-family:'Liberation Sans',sans-serif;">the RFP</div>
<div class="a" style="left:448.40px;top:226.24px;font-size:12px;line-height:12px;color:#333;font-weight:400;letter-spacing:0.000px;font-family:'Liberation Sans',sans-serif;">Awaiting</div>
<div class="a" style="left:448.40px;top:241.04px;font-size:12px;line-height:12px;color:#333;font-weight:400;letter-spacing:-0.004px;font-family:'Liberation Sans',sans-serif;">Responses</div>
<div class="a" style="left:520.40px;top:226.24px;font-size:12px;line-height:12px;color:#c6c6c6;font-weight:400;letter-spacing:0.000px;font-family:'Liberation Sans',sans-serif;">Scoring</div>
<div class="a" style="left:592.80px;top:226.24px;font-size:12px;line-height:12px;color:#c6c6c6;font-weight:400;letter-spacing:0.000px;font-family:'Liberation Sans',sans-serif;">Making</div>
<div class="a" style="left:592.80px;top:241.04px;font-size:12px;line-height:12px;color:#c6c6c6;font-weight:400;letter-spacing:0.000px;font-family:'Liberation Sans',sans-serif;">Decisions</div>
<div class="a" style="left:665.30px;top:226.24px;font-size:12px;line-height:12px;color:#c6c6c6;font-weight:400;letter-spacing:0.000px;font-family:'Liberation Sans',sans-serif;">Closed</div>
<div class="a" style="left:376.00px;top:265.52px;font-size:8.5px;line-height:8.5px;color:#8a8a8a;font-weight:400;letter-spacing:0.000px;font-family:'Liberation Sans',sans-serif;">1 sections</div>
<div class="a" style="left:376.00px;top:275.57px;font-size:8.5px;line-height:8.5px;color:#8a8a8a;font-weight:400;letter-spacing:0.000px;font-family:'Liberation Sans',sans-serif;">2 total</div>
<div class="a" style="left:376.00px;top:285.62px;font-size:8.5px;line-height:8.5px;color:#8a8a8a;font-weight:400;letter-spacing:0.000px;font-family:'Liberation Sans',sans-serif;">questions</div>
<div class="a" style="left:448.40px;top:265.47px;font-size:8.6px;line-height:8.6px;color:#8a8a8a;font-weight:400;letter-spacing:0.000px;font-family:'Liberation Sans',sans-serif;">1 invitation</div>
<div class="a" style="left:448.40px;top:275.52px;font-size:8.6px;line-height:8.6px;color:#8a8a8a;font-weight:400;letter-spacing:0.000px;font-family:'Liberation Sans',sans-serif;">0 active</div>
<div class="a" style="left:448.40px;top:285.57px;font-size:8.6px;line-height:8.6px;color:#8a8a8a;font-weight:400;letter-spacing:0.000px;font-family:'Liberation Sans',sans-serif;">proposal</div>
<div class="a" style="left:448.40px;top:295.62px;font-size:8.6px;line-height:8.6px;color:#8a8a8a;font-weight:400;letter-spacing:0.000px;font-family:'Liberation Sans',sans-serif;">0 submitted</div>
<div class="a" style="left:448.40px;top:305.67px;font-size:8.6px;line-height:8.6px;color:#8a8a8a;font-weight:400;letter-spacing:0.000px;font-family:'Liberation Sans',sans-serif;">proposal</div>
<svg style="left:371px;top:313px" width="65.60000000000002" height="10" viewBox="0 0 65.60000000000002 10"><path d="M0 6H60.60000000000002" stroke="#4a4a4a" stroke-width="1.4"/><path d="M59.10000000000002 3L64.60000000000002 6L59.10000000000002 9Z" fill="#444"/></svg>
<svg style="left:443.5px;top:313px" width="65.60000000000002" height="10" viewBox="0 0 65.60000000000002 10"><path d="M0 6H60.60000000000002" stroke="#4a4a4a" stroke-width="1.4"/><path d="M59.10000000000002 3L64.60000000000002 6L59.10000000000002 9Z" fill="#444"/></svg>
<svg style="left:515.6px;top:313px" width="65.60000000000002" height="10" viewBox="0 0 65.60000000000002 10"><path d="M0 6H60.60000000000002" stroke="#4a4a4a" stroke-width="1.4"/><path d="M59.10000000000002 3L64.60000000000002 6L59.10000000000002 9Z" fill="#444"/></svg>
<svg style="left:588.1px;top:313px" width="65.60000000000002" height="10" viewBox="0 0 65.60000000000002 10"><path d="M0 6H60.60000000000002" stroke="#4a4a4a" stroke-width="1.4"/><path d="M59.10000000000002 3L64.60000000000002 6L59.10000000000002 9Z" fill="#444"/></svg>
<svg style="left:660.2px;top:313px" width="65.60000000000002" height="10" viewBox="0 0 65.60000000000002 10"><path d="M0 6H60.60000000000002" stroke="#4a4a4a" stroke-width="1.4"/><path d="M59.10000000000002 3L64.60000000000002 6L59.10000000000002 9Z" fill="#444"/></svg>
<svg style="left:366px;top:312.5px" width="10" height="10" viewBox="0 0 10 10"><circle cx="5" cy="5" r="4" fill="#f2f2f2" stroke="#383838" stroke-width="1.5"/><path d="M2.8 6.5L4.3 7.6L7.4 4.6" stroke="#3cb043" stroke-width="0.9" fill="none"/></svg>
<svg style="left:438.5px;top:312.5px" width="10" height="10" viewBox="0 0 10 10"><circle cx="5" cy="5" r="4" fill="#f2f2f2" stroke="#383838" stroke-width="1.5"/><path d="M2.8 6.5L4.3 7.6L7.4 4.6" stroke="#3cb043" stroke-width="0.9" fill="none"/></svg>
<svg style="left:510.6px;top:312.5px" width="10" height="10" viewBox="0 0 10 10"><circle cx="5" cy="5" r="4" fill="#e4e4e4" stroke="#383838" stroke-width="1.5"/></svg>
<svg style="left:583.1px;top:312.5px" width="10" height="10" viewBox="0 0 10 10"><circle cx="5" cy="5" r="4" fill="#e4e4e4" stroke="#383838" stroke-width="1.5"/></svg>
<svg style="left:655.2px;top:312.5px" width="10" height="10" viewBox="0 0 10 10"><circle cx="5" cy="5" r="4" fill="#e4e4e4" stroke="#383838" stroke-width="1.5"/></svg>
<div class="a" style="left:355.7px;top:394.5px;width:394.3px;height:60px;background:#fff;box-shadow:0 0 0 0.5px #e2e0e1"></div>
<div class="a" style="left:363.30px;top:407.45px;font-size:7.4px;line-height:7.4px;color:#555;font-weight:400;letter-spacing:0.047px;font-family:'Liberation Sans',sans-serif;">Vendor Invitations</div>
<svg style="left:444px;top:405.5px" width="8" height="8" viewBox="0 0 8 8"><circle cx="3.2" cy="3.2" r="2.3" fill="none" stroke="#333" stroke-width="1.1"/><path d="M4.9 4.9L7 7" stroke="#333" stroke-width="1.4"/></svg>
<div class="a" style="left:460.90px;top:407.04px;font-size:7.2px;line-height:7.2px;color:#b9b9b9;font-weight:400;letter-spacing:0.032px;font-family:'Liberation Sans',sans-serif;">Search current invitations..</div>
<div class="a" style="left:571.7px;top:403.2px;width:65px;height:15.2px;background:#fff;border:0.8px solid #d9e0e8;border-radius:2.5px"></div>
<div class="a" style="left:580.50px;top:407.79px;font-size:7.1px;line-height:7.1px;color:#555;font-weight:400;letter-spacing:-0.023px;font-family:'Liberation Sans',sans-serif;">Select Status</div>
<svg style="left:624px;top:410.8px" width="5" height="3" viewBox="0 0 5 3"><path d="M0.3 0.3H4.7L2.5 2.7Z" fill="#333"/></svg>
<div class="a" style="left:695.00px;top:406.89px;font-size:7.1px;line-height:7.1px;color:#3f5f9f;font-weight:700;letter-spacing:0.007px;font-family:'Liberation Sans',sans-serif;">Invite Contact</div>
<div class="a" style="left:355.7px;top:423px;width:394.3px;height:0.8px;background:#ebe9ea;"></div>
<div class="a" style="left:370.00px;top:436.48px;font-size:6.3px;line-height:6.3px;color:#222;font-weight:700;letter-spacing:0.043px;font-family:'Liberation Sans',sans-serif;">VENDOR</div>
<div class="a" style="left:370.00px;top:445.28px;font-size:6.3px;line-height:6.3px;color:#333;font-weight:400;letter-spacing:0.000px;font-family:'Liberation Sans',sans-serif;">CONTACT</div>
<div class="a" style="left:453.40px;top:436.48px;font-size:6.3px;line-height:6.3px;color:#222;font-weight:700;letter-spacing:0.046px;font-family:'Liberation Sans',sans-serif;">ACCOUNT</div>
<div class="a" style="left:453.40px;top:445.28px;font-size:6.3px;line-height:6.3px;color:#333;font-weight:400;letter-spacing:0.000px;font-family:'Liberation Sans',sans-serif;">POINT OF CONTACT</div>
<div class="a" style="left:536.70px;top:436.22px;font-size:6.2px;line-height:6.2px;color:#333;font-weight:400;letter-spacing:0.002px;font-family:'Liberation Sans',sans-serif;">STATUS</div>
<div class="a" style="left:581.30px;top:436.22px;font-size:6.2px;line-height:6.2px;color:#333;font-weight:400;letter-spacing:-0.259px;font-family:'Liberation Sans',sans-serif;">PROGRESS</div>
<div class="a" style="left:635.80px;top:436.22px;font-size:6.2px;line-height:6.2px;color:#333;font-weight:400;letter-spacing:-0.054px;font-family:'Liberation Sans',sans-serif;">SCORING</div>
<div class="a" style="left:685.00px;top:436.22px;font-size:6.2px;line-height:6.2px;color:#333;font-weight:400;letter-spacing:-0.000px;font-family:'Liberation Sans',sans-serif;">ACTIONS</div>
<div class="a" style="left:758.8px;top:87.5px;width:1.2px;height:362.5px;background:#fbfafb;"></div>
</body></html>
